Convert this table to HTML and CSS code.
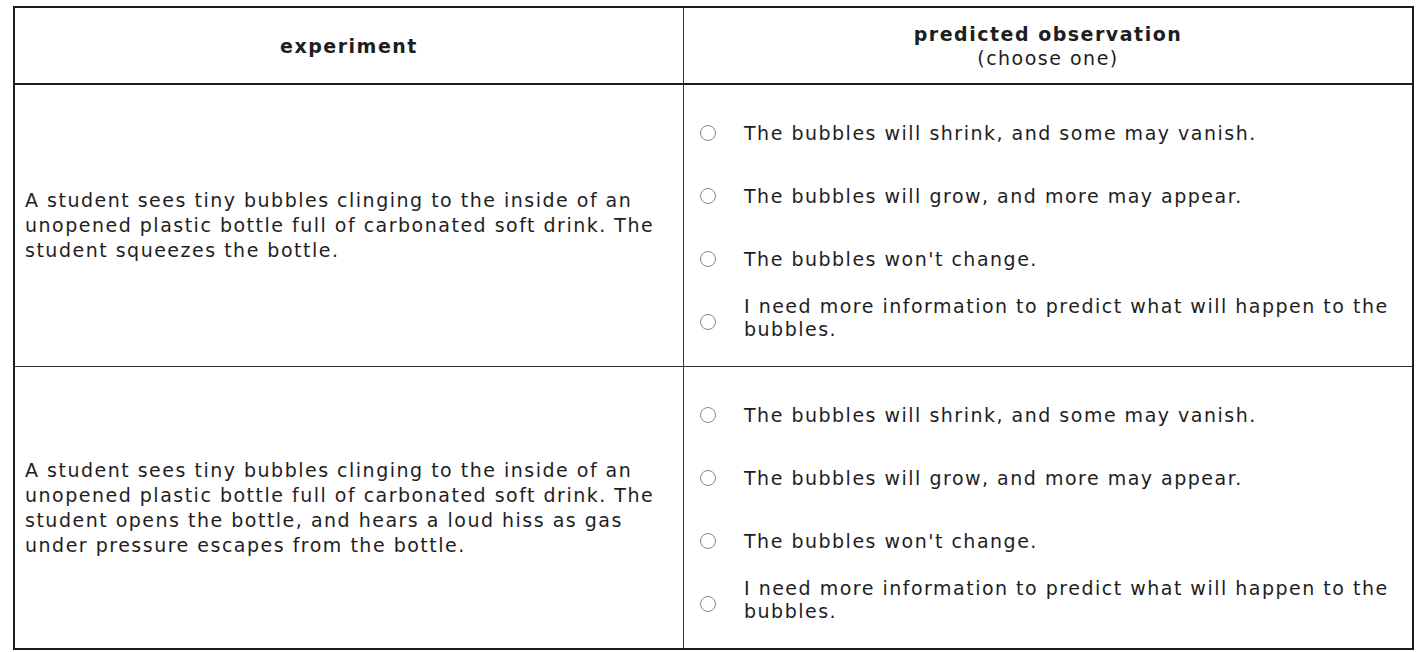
FILE: index.html
```html
<!DOCTYPE html>
<html>
<head>
<meta charset="utf-8">
<link rel="stylesheet" href="styles.css">
</head>
<body>
<table class="grid">
  <thead>
    <tr>
      <th class="col-exp"><span class="h">experiment</span></th>
      <th class="col-obs"><span class="h">predicted observation</span><br><span class="sub">(choose one)</span></th>
    </tr>
  </thead>
  <tbody>
    <tr>
      <td class="exp">A student sees tiny bubbles clinging to the inside of an unopened plastic bottle full of carbonated soft drink. The student squeezes the bottle.</td>
      <td class="obs">
        <ul class="opts">
          <li class="opt"><span class="radio"></span><span class="lbl">The bubbles will shrink, and some may vanish.</span></li>
          <li class="opt"><span class="radio"></span><span class="lbl">The bubbles will grow, and more may appear.</span></li>
          <li class="opt"><span class="radio"></span><span class="lbl">The bubbles won't change.</span></li>
          <li class="opt two"><span class="radio"></span><span class="lbl">I need more information to predict what will happen to the bubbles.</span></li>
        </ul>
      </td>
    </tr>
    <tr>
      <td class="exp">A student sees tiny bubbles clinging to the inside of an unopened plastic bottle full of carbonated soft drink. The student opens the bottle, and hears a loud hiss as gas under pressure escapes from the bottle.</td>
      <td class="obs">
        <ul class="opts">
          <li class="opt"><span class="radio"></span><span class="lbl">The bubbles will shrink, and some may vanish.</span></li>
          <li class="opt"><span class="radio"></span><span class="lbl">The bubbles will grow, and more may appear.</span></li>
          <li class="opt"><span class="radio"></span><span class="lbl">The bubbles won't change.</span></li>
          <li class="opt two"><span class="radio"></span><span class="lbl">I need more information to predict what will happen to the bubbles.</span></li>
        </ul>
      </td>
    </tr>
  </tbody>
</table>
</body>
</html>
```

FILE: styles.css
```css
html, body {
  margin: 0;
  padding: 0;
  background: #ffffff;
}
body {
  padding: 6px 0 0 13px;
  font-family: "DejaVu Sans", Verdana, sans-serif;
  color: #1e1e1e;
  font-size: 19px;
  letter-spacing: 1.5px;
}
.grid {
  border-collapse: collapse;
  width: 1401px;
  border: 2px solid #1c1c1c;
}
.grid th {
  height: 75px;
  border-bottom: 2px solid #1c1c1c;
  text-align: center;
  vertical-align: middle;
  font-weight: normal;
  line-height: 24px;
  padding: 0;
}
.col-exp {
  width: 668px;
  border-right: 1px solid #333;
}
.h {
  font-weight: bold;
}
.sub {
  font-weight: normal;
}
.grid td {
  padding: 0;
  vertical-align: middle;
}
.exp {
  border-right: 1px solid #333;
  padding: 0 24px 0 10px !important;
  line-height: 25px;
  height: 281px;
}
.grid tbody tr + tr td {
  border-top: 1.5px solid #333;
}
.opts {
  list-style: none;
  margin: 0;
  padding: 21px 12px 25px 16px;
  display: flex;
  flex-direction: column;
  gap: 9px;
}
.opt {
  display: flex;
  align-items: center;
  min-height: 54px;
  line-height: 23px;
}
.opt.two {
  min-height: 46px;
}
.opt.two .radio {
  margin-top: 8px;
}
.radio {
  flex: none;
  width: 16px;
  height: 16px;
  border: 1px solid #8a8a8a;
  border-radius: 50%;
  margin-right: 28px;
  box-sizing: border-box;
}
.lbl {
  flex: 1;
}
```
